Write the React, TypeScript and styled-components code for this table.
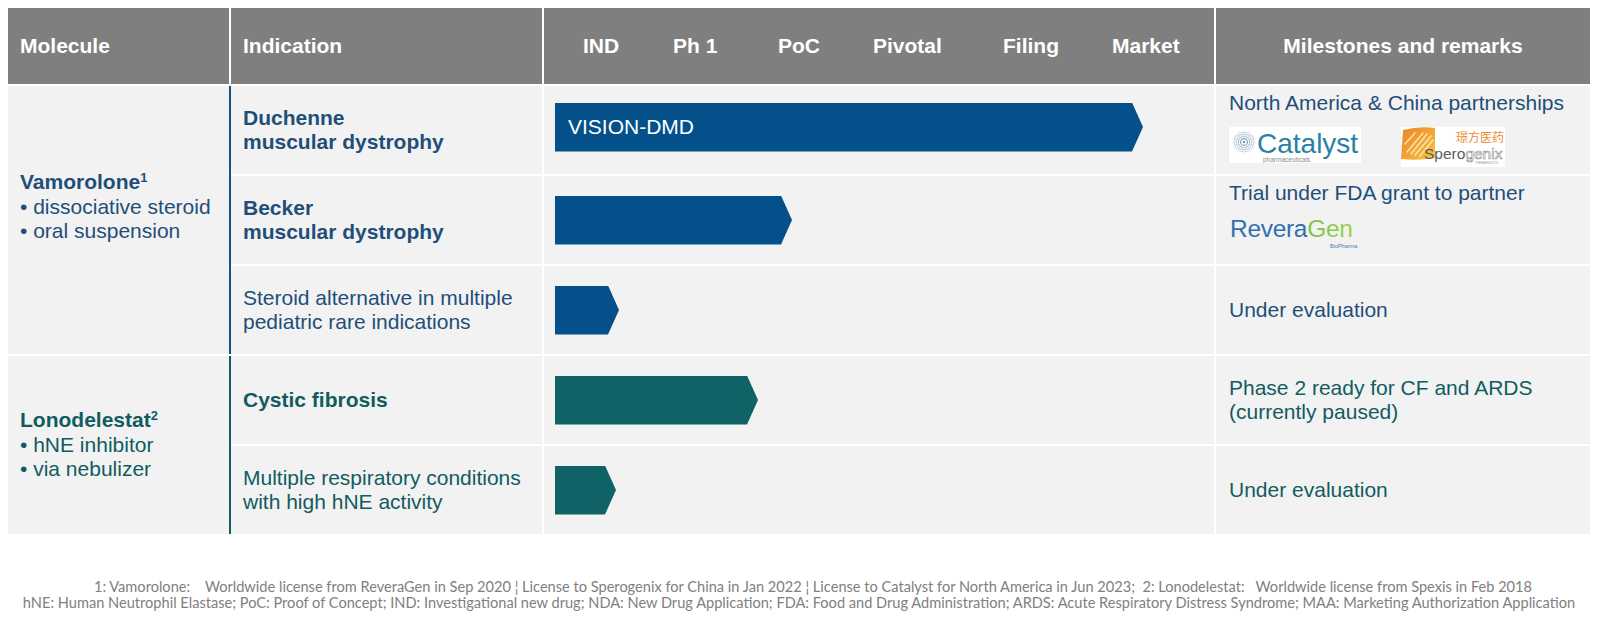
import React from "react";
import styled, { createGlobalStyle } from "styled-components";

const GlobalStyle = createGlobalStyle`
  html, body { margin: 0; padding: 0; background: #ffffff; }
  body { font-family: "Liberation Sans", Arial, sans-serif; }
`;

type Tone = { text: string; bar: string };
const BLUE: Tone = { text: "#1f4e79", bar: "#03508b" };
const TEAL: Tone = { text: "#115c5f", bar: "#0f6366" };

const Page = styled.div`
  width: 1600px;
  height: 624px;
  box-sizing: border-box;
  padding: 8px 0 0 8px;
  display: flex;
  flex-direction: column;
  overflow: hidden;
`;

const Table = styled.div`
  display: grid;
  grid-template-columns: 221px 311px 670px 374px;
  grid-template-rows: 76px repeat(5, 88px);
  gap: 2px;
  font-size: 21px;
  line-height: 24.5px;
`;

const HeadCell = styled.div<{ $center?: boolean }>`
  background: #7f7f7f;
  color: #ffffff;
  font-weight: bold;
  display: flex;
  align-items: center;
  justify-content: ${(p) => (p.$center ? "center" : "flex-start")};
  padding-left: ${(p) => (p.$center ? 0 : 12)}px;
`;

const StageHead = styled.div`
  background: #7f7f7f;
  color: #ffffff;
  font-weight: bold;
  display: grid;
  grid-template-columns: 90px 105px 95px 130px 109px auto;
  align-items: center;
  padding-left: 39px;
`;

const MoleculeCell = styled.div<{ $tone: Tone; $span: number; $lift: number }>`
  grid-column: 1;
  grid-row: span ${(p) => p.$span};
  background: #f2f2f2;
  box-shadow: 2px 0 0 ${(p) => p.$tone.text};
  color: ${(p) => p.$tone.text};
  display: flex;
  flex-direction: column;
  justify-content: center;
  padding: 0 0 ${(p) => p.$lift}px 12px;
`;

const MolName = styled.div`
  font-weight: bold;
`;

const Sup = styled.span`
  font-size: 13px;
  line-height: 0;
  vertical-align: 7px;
`;

const IndicationCell = styled.div<{ $tone: Tone; $bold: boolean }>`
  grid-column: 2;
  background: #f2f2f2;
  color: ${(p) => p.$tone.text};
  font-weight: ${(p) => (p.$bold ? "bold" : "normal")};
  display: flex;
  flex-direction: column;
  justify-content: center;
  padding-left: 12px;
`;

const StageCell = styled.div`
  grid-column: 3;
  background: #f2f2f2;
  display: flex;
  align-items: center;
  padding-left: 11px;
`;

const Bar = styled.div<{ $width: number; $color: string; $lift: number }>`
  width: ${(p) => p.$width}px;
  height: 49px;
  margin-bottom: ${(p) => p.$lift * 2}px;
  background: ${(p) => p.$color};
  clip-path: polygon(0 0, calc(100% - 11px) 0, 100% 50%, calc(100% - 11px) 100%, 0 100%);
  color: #ffffff;
  display: flex;
  align-items: center;
  padding-left: 13px;
  box-sizing: border-box;
`;

const MilestoneCell = styled.div<{ $tone: Tone; $top: boolean }>`
  grid-column: 4;
  background: #f2f2f2;
  color: ${(p) => p.$tone.text};
  display: flex;
  flex-direction: column;
  justify-content: ${(p) => (p.$top ? "flex-start" : "center")};
  padding: ${(p) => (p.$top ? "5px" : "0")} 0 0 13px;
`;

const LogoRow = styled.div<{ $gap: number; $top: number }>`
  display: flex;
  align-items: flex-start;
  gap: ${(p) => p.$gap}px;
  margin-top: ${(p) => p.$top}px;
`;

const Footer = styled.div`
  width: 1582px;
  margin-top: 45px;
  font-family: Lato, "Liberation Sans", sans-serif;
  font-size: 14.6px;
  line-height: 16px;
  color: #808080;
  text-align: center;
  white-space: pre;
`;

const FootLine = styled.div<{ $shift: number }>`
  padding-left: ${(p) => p.$shift}px;
`;

const CatalystLogo = () => {
  const rays = Array.from({ length: 30 }, (_, i) => i * 12);
  return (
    <svg width="132" height="36" viewBox="0 0 132 36">
      <rect width="132" height="36" fill="#ffffff" />
      <g transform="translate(15 15)">
        {rays.map((a) => (
          <line
            key={a}
            x1={0}
            y1={-5}
            x2={0}
            y2={-11.5}
            transform={`rotate(${a})`}
            stroke="#9fb3c7"
            strokeWidth="1"
            strokeDasharray="1.2 0.9"
          />
        ))}
        <circle r="3.4" fill="#ffffff" stroke="#7d99b6" strokeWidth="1.1" />
        <circle r="1.3" fill="#7d99b6" />
      </g>
      <text x="28" y="26" fontFamily="'Liberation Sans', Arial, sans-serif" fontSize="28" fill="#2c7fa3">
        Catalyst
      </text>
      <text x="34" y="34.5" fontFamily="'Liberation Sans', Arial, sans-serif" fontSize="6.5" fill="#8c8c8c">
        pharmaceuticals
      </text>
    </svg>
  );
};

const SperogenixLogo = () => (
  <svg width="104" height="40" viewBox="0 0 104 40">
    <defs>
      <linearGradient id="spg" x1="0" y1="0" x2="1" y2="1">
        <stop offset="0" stopColor="#e9862c" />
        <stop offset="0.55" stopColor="#f2a635" />
        <stop offset="1" stopColor="#f7c844" />
      </linearGradient>
    </defs>
    <rect width="104" height="40" fill="#ffffff" />
    <path d="M2 3 Q18 -1 34 1 L34 31 Q17 34 0 32 Z" fill="url(#spg)" />
    <g stroke="#fff1c8" strokeOpacity="0.85" strokeWidth="1.4" strokeLinecap="round">
      <line x1="6" y1="25" x2="22" y2="6" />
      <line x1="10" y1="27" x2="26" y2="7" />
      <line x1="14" y1="28" x2="30" y2="9" />
      <line x1="19" y1="29" x2="32" y2="13" />
      <line x1="4" y1="17" x2="14" y2="6" />
    </g>
    <text
      x="55"
      y="15"
      fontFamily="'Noto Sans CJK SC', sans-serif"
      fontSize="12"
      fill="#ee8a2e"
    >
      璟方医药
    </text>
    <text x="23" y="32" fontFamily="'Liberation Sans', Arial, sans-serif" fontSize="15.5">
      <tspan fill="#5a5a5a">Spero</tspan>
      <tspan fill="#ffffff" stroke="#8f8f8f" strokeWidth="0.6">genix</tspan>
    </text>
    <text x="74" y="37" fontFamily="'Liberation Sans', Arial, sans-serif" fontSize="3" fill="#999999">
      THERAPEUTICS
    </text>
  </svg>
);

const ReveraGenLogo = () => (
  <svg width="134" height="38" viewBox="0 0 134 38">
    <defs>
      <linearGradient id="rvg" x1="0" y1="0" x2="1" y2="0">
        <stop offset="0" stopColor="#47a84a" />
        <stop offset="1" stopColor="#9ccf4c" />
      </linearGradient>
    </defs>
    <text x="1" y="22" fontFamily="'Liberation Sans', Arial, sans-serif" fontSize="24.5" letterSpacing="-0.3">
      <tspan fill="#2f6fb0">Revera</tspan>
      <tspan fill="url(#rvg)">Gen</tspan>
    </text>
    <text x="101" y="33" fontFamily="'Liberation Sans', Arial, sans-serif" fontSize="5.5" fill="#4a7ab0">
      BioPharma
    </text>
  </svg>
);

type Row = {
  ind: string[];
  bold: boolean;
  bar: number;
  lift: number;
  label?: string;
  note: string[];
  logos?: "catalyst" | "reveragen";
};

type Group = {
  name: string;
  sup: string;
  bullets: string[];
  tone: Tone;
  lift: number;
  rows: Row[];
};

const groups: Group[] = [
  {
    name: "Vamorolone",
    sup: "1",
    bullets: ["dissociative steroid", "oral suspension"],
    tone: BLUE,
    lift: 26,
    rows: [
      {
        ind: ["Duchenne", "muscular dystrophy"],
        bold: true,
        bar: 588,
        lift: 3,
        label: "VISION-DMD",
        note: ["North America & China partnerships"],
        logos: "catalyst",
      },
      {
        ind: ["Becker", "muscular dystrophy"],
        bold: true,
        bar: 237,
        lift: 0,
        note: ["Trial under FDA grant to partner"],
        logos: "reveragen",
      },
      {
        ind: ["Steroid alternative in multiple", "pediatric rare indications"],
        bold: false,
        bar: 64,
        lift: 0,
        note: ["Under evaluation"],
      },
    ],
  },
  {
    name: "Lonodelestat",
    sup: "2",
    bullets: ["hNE inhibitor", "via nebulizer"],
    tone: TEAL,
    lift: 0,
    rows: [
      {
        ind: ["Cystic fibrosis"],
        bold: true,
        bar: 203,
        lift: 0,
        note: ["Phase 2 ready for CF and ARDS", "(currently paused)"],
      },
      {
        ind: ["Multiple respiratory conditions", "with high hNE activity"],
        bold: false,
        bar: 61,
        lift: 0,
        note: ["Under evaluation"],
      },
    ],
  },
];

const stages = ["IND", "Ph 1", "PoC", "Pivotal", "Filing", "Market"];

export default function App() {
  return (
    <>
      <GlobalStyle />
      <Page>
        <Table>
          <HeadCell>Molecule</HeadCell>
          <HeadCell>Indication</HeadCell>
          <StageHead>
            {stages.map((s) => (
              <span key={s}>{s}</span>
            ))}
          </StageHead>
          <HeadCell $center>Milestones and remarks</HeadCell>

          {groups.map((g) => (
            <React.Fragment key={g.name}>
              <MoleculeCell $tone={g.tone} $span={g.rows.length} $lift={g.lift}>
                <MolName>
                  {g.name}
                  <Sup>{g.sup}</Sup>
                </MolName>
                {g.bullets.map((b) => (
                  <div key={b}>• {b}</div>
                ))}
              </MoleculeCell>
              {g.rows.map((r) => (
                <React.Fragment key={r.ind.join(" ")}>
                  <IndicationCell $tone={g.tone} $bold={r.bold}>
                    {r.ind.map((l) => (
                      <div key={l}>{l}</div>
                    ))}
                  </IndicationCell>
                  <StageCell>
                    <Bar $width={r.bar} $color={g.tone.bar} $lift={r.lift}>
                      {r.label}
                    </Bar>
                  </StageCell>
                  <MilestoneCell $tone={g.tone} $top={!!r.logos}>
                    {r.note.map((l) => (
                      <div key={l}>{l}</div>
                    ))}
                    {r.logos === "catalyst" && (
                      <LogoRow $gap={40} $top={11}>
                        <CatalystLogo />
                        <SperogenixLogo />
                      </LogoRow>
                    )}
                    {r.logos === "reveragen" && (
                      <LogoRow $gap={0} $top={9}>
                        <ReveraGenLogo />
                      </LogoRow>
                    )}
                  </MilestoneCell>
                </React.Fragment>
              ))}
            </React.Fragment>
          ))}
        </Table>
        <Footer>
          <FootLine $shift={28}>
            {"1: Vamorolone:    Worldwide license from ReveraGen in Sep 2020 ¦ License to Sperogenix for China in Jan 2022 ¦ License to Catalyst for North America in Jun 2023;  2: Lonodelestat:   Worldwide license from Spexis in Feb 2018"}
          </FootLine>
          <FootLine $shift={0}>
            {"hNE: Human Neutrophil Elastase; PoC: Proof of Concept; IND: Investigational new drug; NDA: New Drug Application; FDA: Food and Drug Administration; ARDS: Acute Respiratory Distress Syndrome; MAA: Marketing Authorization Application"}
          </FootLine>
        </Footer>
      </Page>
    </>
  );
}
